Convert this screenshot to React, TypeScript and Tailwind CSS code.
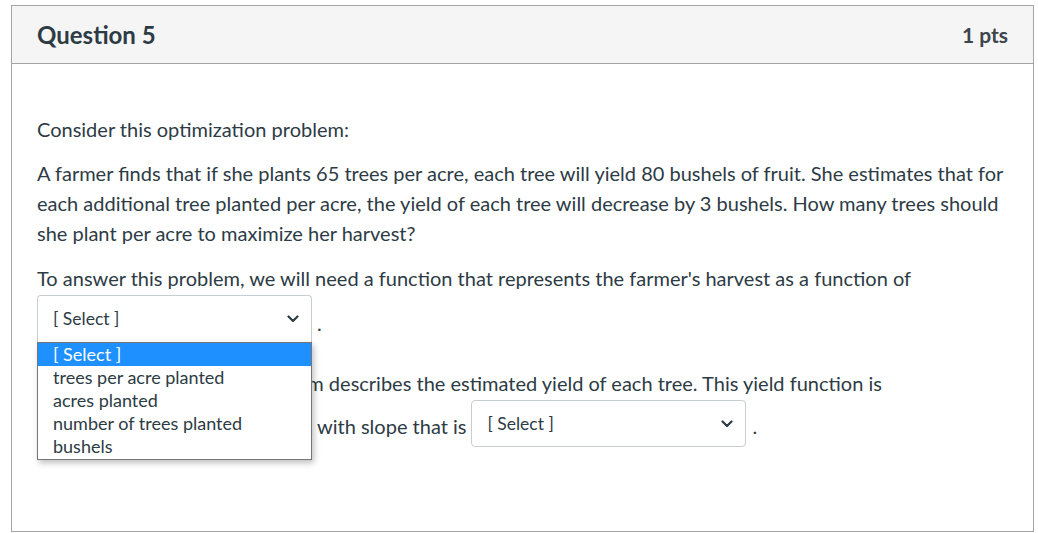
import React from "react";

const options = [
  "[ Select ]",
  "trees per acre planted",
  "acres planted",
  "number of trees planted",
  "bushels",
];

const Chevron = () => (
  <svg width="12" height="8" viewBox="0 0 12 8" fill="none">
    <path d="M1.5 1.5 6 6l4.5-4.5" stroke="#2d3b45" strokeWidth="2.2" strokeLinecap="round" strokeLinejoin="round" />
  </svg>
);

const SelectBox = ({ className = "" }: { className?: string }) => (
  <div
    className={`flex h-[47px] w-[275px] shrink-0 items-center justify-between rounded-[4px] border border-[#c7cdd1] bg-white pl-[15px] pr-[12px] text-[17.5px] text-[#2d3b45] ${className}`}
  >
    <span>[ Select ]</span>
    <Chevron />
  </div>
);

export default function App() {
  return (
    <div className="min-h-[533px] bg-white pl-[11px] pt-[5px] font-['Lato','Open_Sans',sans-serif] text-[#2d3b45]">
      <div className="h-[527px] w-[1023px] border border-[#a5a5a5]">
        <div className="flex h-[58px] items-center justify-between border-b border-[#a5a5a5] bg-[#f5f5f5] px-[25px]">
          <h2 className="text-[24px] font-bold">Question 5</h2>
          <span className="text-[21px] font-bold text-[#3d454c]">1 pts</span>
        </div>

        <div className="pl-[25px] pt-[50px] text-[20px] leading-[30px]">
          <p className="whitespace-nowrap">Consider this optimization problem:</p>

          <p className="mt-[14px] whitespace-nowrap">
            A farmer finds that if she plants 65 trees per acre, each tree will yield 80 bushels of fruit. She estimates that for
            <br />
            each additional tree planted per acre, the yield of each tree will decrease by 3 bushels. How many trees should
            <br />
            she plant per acre to maximize her harvest?
          </p>

          <div className="mt-[15px]">
            <p className="whitespace-nowrap">
              To answer this problem, we will need a function that represents the farmer's harvest as a function of
            </p>
            <div className="relative mt-[2px] flex items-end">
              <SelectBox className="rounded-b-none border-b-0" />
              <span className="mb-[4px] ml-[5px]">.</span>

              <div className="absolute left-0 top-[47px] z-10 w-[275px] border border-[#767676] bg-white pb-[1px] text-[18px] leading-[23px] shadow-[2px_3px_6px_rgba(0,0,0,0.25)]">
                {options.map((o, i) => (
                  <div
                    key={o}
                    className={`h-[23px] pl-[15px] whitespace-nowrap ${
                      i === 0 ? "bg-[#1e90ff] text-white" : "text-[#2d3b45]"
                    }`}
                  >
                    {o}
                  </div>
                ))}
              </div>
            </div>
          </div>

          <div className="mt-[26px]">
            <p className="whitespace-nowrap">
              The second piece of the problem describes the estimated yield of each tree. This yield function is
            </p>
            <div className="mt-[2px] flex items-end">
              <SelectBox />
              <span className="mb-[6px] ml-[5px] whitespace-nowrap">with slope that is</span>
              <SelectBox className="ml-[5px]" />
              <span className="mb-[6px] ml-[6px]">.</span>
            </div>
          </div>
        </div>
      </div>
    </div>
  );
}
